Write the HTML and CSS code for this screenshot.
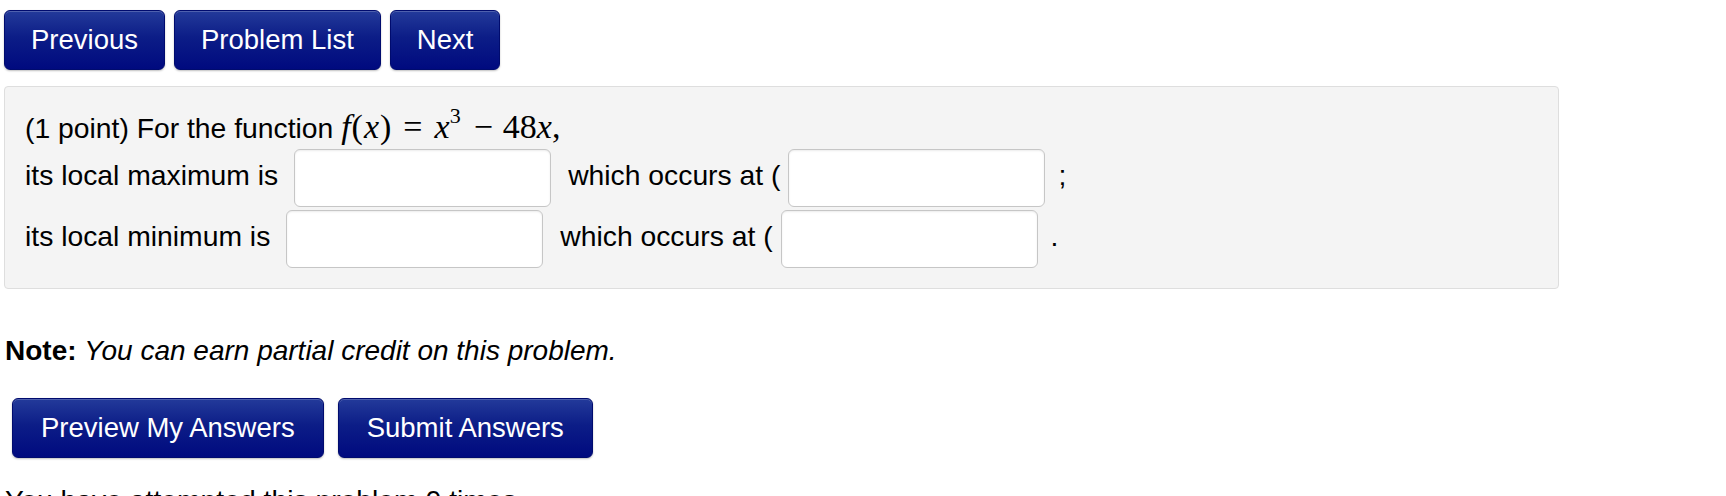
FILE: index.html
```html
<!DOCTYPE html>
<html lang="en">
<head>
<meta charset="utf-8">
<title>Problem</title>
<link rel="stylesheet" href="styles.css">
</head>
<body>
<div class="nav">
  <button class="btn">Previous</button>
  <button class="btn">Problem List</button>
  <button class="btn">Next</button>
</div>

<div class="problem">
  <div class="line-intro">(1 point) For the function <span class="math"><i>f</i><span class="paren">(</span><i>x</i><span class="paren">)</span><span class="rel">=</span><i>x</i><sup>3</sup><span class="bin">−</span>48<i>x</i>,</span></div>
  <div class="row">
    <span class="label">its local maximum is</span>
    <input class="answer" type="text">
    <span class="label label-at">which occurs at (</span>
    <input class="answer" type="text">
    <span class="punct">;</span>
  </div>
  <div class="row">
    <span class="label">its local minimum is</span>
    <input class="answer" type="text">
    <span class="label label-at">which occurs at (</span>
    <input class="answer" type="text">
    <span class="punct">.</span>
  </div>
</div>

<p class="note"><b>Note:</b> <i>You can earn partial credit on this problem.</i></p>

<div class="actions">
  <button class="btn">Preview My Answers</button>
  <button class="btn">Submit Answers</button>
</div>

<p class="attempts">You have attempted this problem 0 times.</p>
</body>
</html>
```

FILE: styles.css
```css
html, body {
  margin: 0;
  padding: 0;
  background: #ffffff;
}

body {
  font-family: "Liberation Sans", Arial, sans-serif;
  font-size: 28.3px;
  color: #000;
  padding: 10px 0 0 4px;
}

.nav {
  display: flex;
  gap: 9px;
}

.btn {
  font-family: "Liberation Sans", Arial, sans-serif;
  font-size: 27.5px;
  color: #fff;
  height: 60px;
  padding: 0 26px;
  border: 1px solid #000b6e;
  border-radius: 6px;
  background: linear-gradient(to bottom, #233a9a 0%, #0c1d87 45%, #000a7f 100%);
  box-shadow: inset 0 1px 0 rgba(255,255,255,0.2), 0 1px 2px rgba(0,0,0,0.25);
  cursor: pointer;
}

.problem {
  margin-top: 16px;
  width: 1523px;
  padding: 20px 10px 19px 20px;
  background: #f4f4f4;
  border: 1px solid #dedede;
  border-radius: 4px;
}

.line-intro {
  line-height: 40px;
  height: 40px;
  white-space: nowrap;
}

.math {
  font-family: "Liberation Serif", "Times New Roman", serif;
  font-size: 34px;
}

.math i {
  font-style: italic;
}

.math .paren {
  margin: 0 1px;
}

.math .rel {
  margin: 0 12px 0 11px;
}

.math sup {
  font-size: 22px;
  vertical-align: 15px;
  line-height: 0;
  margin-right: 11px;
}

.math .bin {
  margin: 0 10px 0 2px;
}

.row {
  display: flex;
  align-items: center;
  height: 61px;
  white-space: nowrap;
}

.row .label {
  margin-right: 8px;
  position: relative;
  top: -2px;
}

.row .label-at {
  margin-left: 8px;
  margin-right: 0;
}

.answer {
  box-sizing: border-box;
  width: 257px;
  height: 58px;
  margin: 0 9px 0 8px;
  border: 1px solid #c6c6c6;
  border-radius: 6px;
  background: #fff;
  box-shadow: inset 0 1px 2px rgba(0,0,0,0.08);
  font-size: 24px;
  padding: 0 10px;
}

.punct {
  margin-left: 4px;
  position: relative;
  top: -2px;
}

.note {
  margin: 46px 0 0 1px;
  font-size: 28px;
  line-height: 32px;
}

.actions {
  display: flex;
  gap: 14px;
  margin: 31px 0 0 8px;
}

.actions .btn {
  padding: 0 28px;
}

.attempts {
  margin: 26px 0 0 1px;
  line-height: 32px;
}
```
